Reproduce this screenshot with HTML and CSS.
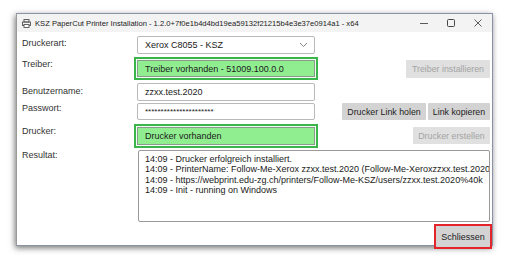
FILE: index.html
```html
<!DOCTYPE html>
<html lang="de">
<head>
<meta charset="utf-8">
<title>KSZ PaperCut Printer Installation</title>
<link rel="stylesheet" href="styles.css">
</head>
<body>
<div class="stage">
  <div class="window">
    <div class="titlebar">
      <svg class="app-icon" width="9" height="9" viewBox="0 0 9 9">
        <rect x="2" y="0.5" width="5" height="2.5" fill="none" stroke="#555" stroke-width="0.9"/>
        <rect x="0.5" y="3" width="8" height="3.5" fill="none" stroke="#555" stroke-width="0.9"/>
        <rect x="2" y="5.5" width="5" height="3" fill="#fff" stroke="#555" stroke-width="0.9"/>
      </svg>
      <span class="title">KSZ PaperCut Printer Installation - 1.2.0+7f0e1b4d4bd19ea59132f21215b4e3e37e0914a1 - x64</span>
      <div class="controls">
        <svg width="10" height="10" viewBox="0 0 10 10"><path d="M1 5.5H9" stroke="#333" stroke-width="0.8"/></svg>
        <svg width="10" height="10" viewBox="0 0 10 10"><rect x="1.5" y="1.5" width="7" height="7" rx="1" fill="none" stroke="#333" stroke-width="0.9"/></svg>
        <svg width="10" height="10" viewBox="0 0 10 10"><path d="M1.5 1.5L8.5 8.5M8.5 1.5L1.5 8.5" stroke="#333" stroke-width="0.8"/></svg>
      </div>
    </div>
    <div class="content">
      <div class="row r1">
        <div class="label">Druckerart:</div>
        <div class="field select">
          <span>Xerox C8055 - KSZ</span>
          <svg class="chev" width="9" height="6" viewBox="0 0 9 6"><path d="M1 1L4.5 4.5L8 1" fill="none" stroke="#666" stroke-width="0.8"/></svg>
        </div>
        <div class="actions"></div>
      </div>
      <div class="row r2">
        <div class="label">Treiber:</div>
        <div class="status"><div class="status-inner">Treiber vorhanden - 51009.100.0.0</div></div>
        <div class="actions"><button class="btn disabled w-install">Treiber installieren</button></div>
      </div>
      <div class="row r3">
        <div class="label lb-user">Benutzername:</div>
        <div class="field">zzxx.test.2020</div>
        <div class="actions"></div>
      </div>
      <div class="row r4">
        <div class="label lb-pass">Passwort:</div>
        <div class="field pw">**********************</div>
        <div class="actions gap"><button class="btn w-holen">Drucker Link holen</button><button class="btn w-kopieren">Link kopieren</button></div>
      </div>
      <div class="row r5">
        <div class="label">Drucker:</div>
        <div class="status"><div class="status-inner">Drucker vorhanden</div></div>
        <div class="actions"><button class="btn disabled w-erstellen">Drucker erstellen</button></div>
      </div>
      <div class="row r6">
        <div class="label lb-res">Resultat:</div>
        <div class="log">
          <div>14:09 - Drucker erfolgreich installiert.</div>
          <div>14:09 - PrinterName: Follow-Me-Xerox zzxx.test.2020 (Follow-Me-Xeroxzzxx.test.2020</div>
          <div>14:09 - https://webprint.edu-zg.ch/printers/Follow-Me-KSZ/users/zzxx.test.2020%40k</div>
          <div>14:09 - Init - running on Windows</div>
        </div>
      </div>
      <div class="row r7">
        <div class="close-wrap"><button class="btn w-close">Schliessen</button></div>
      </div>
    </div>
  </div>
</div>
</body>
</html>
```
FILE: styles.css
```css
html, body {
  margin: 0;
  padding: 0;
  background: #ffffff;
}
body {
  width: 511px;
  height: 260px;
  overflow: hidden;
  font-family: "Liberation Sans", Arial, sans-serif;
  color: #1f1f1f;
}
.stage {
  padding: 13px 17px 0 16px;
}
.window {
  width: 477px;
  height: 233px;
  background: #ffffff;
  border: 1px solid #8a93a6;
  border-left-color: #9a9a9a;
  box-sizing: border-box;
  box-shadow: -1px 2px 6px rgba(0,0,0,0.55);
}
.titlebar {
  height: 18px;
  background: #f3f3f3;
  display: flex;
  align-items: center;
  padding-left: 5px;
}
.app-icon {
  flex: none;
  margin-right: 4px;
}
.title {
  font-size: 7.6px;
  color: #222;
  white-space: nowrap;
  flex: 1;
  overflow: hidden;
}
.controls {
  display: flex;
  gap: 17px;
  padding-right: 9px;
  align-items: center;
}
.content {
  padding: 4px 2px 0 5px;
}
.row {
  display: grid;
  grid-template-columns: 112px 184px 1fr;
  align-items: center;
}
.label {
  font-size: 9px;
  color: #333;
  align-self: start;
  padding-top: 2px;
  line-height: 11px;
}
.r1 { height: 18px; margin-bottom: 3px; }
.r2 { height: 23px; margin-bottom: 3px; }
.r3 { height: 18px; margin-bottom: 2px; }
.r4 { height: 17px; margin-bottom: 4px; }
.r5 { height: 24px; margin-bottom: 2px; }
.r6 { height: 72px; margin-bottom: 2px; }
.r7 { height: 25px; display: flex; justify-content: flex-end; }
.lb-user { padding-top: 3px; }
.lb-pass { padding-top: 0; }
.lb-res { padding-top: 0; }
.field {
  margin: 0 3px;
  height: 100%;
  box-sizing: border-box;
  border: 1px solid #b9b9b9;
  border-radius: 2px;
  background: #fff;
  font-size: 9px;
  display: flex;
  align-items: center;
  padding-left: 7px;
  color: #1a1a1a;
}
.select {
  justify-content: space-between;
  padding-right: 6px;
}
.pw {
  font-size: 8px;
}
.status {
  height: 100%;
  box-sizing: border-box;
  border: 2px solid #39b54a;
  padding: 1px;
  background: #f4fbf4;
}
.status-inner {
  height: 100%;
  box-sizing: border-box;
  border: 1px solid #8a9a8a;
  background: #90ee90;
  font-size: 9px;
  display: flex;
  align-items: center;
  padding-left: 7px;
  color: #1a1a1a;
}
.actions {
  display: flex;
  justify-content: flex-end;
  align-items: center;
  height: 100%;
}
.actions.gap { gap: 2px; }
.btn {
  font-family: "Liberation Sans", Arial, sans-serif;
  font-size: 8.8px;
  border: none;
  border-radius: 1px;
  background: #d3d3d3;
  color: #222;
  padding: 0;
  margin: 0;
  height: 18px;
}
.btn.disabled {
  background: #e0e0e0;
  color: #a3a3a3;
}
.w-install { width: 84px; height: 18px; }
.w-holen { width: 84px; height: 17px; }
.w-kopieren { width: 62px; height: 17px; }
.w-erstellen { width: 77px; height: 17px; margin-top: -1px; }
.log {
  grid-column: 2 / 4;
  margin-left: 4px;
  height: 100%;
  box-sizing: border-box;
  border: 1px solid #9a9a9a;
  border-radius: 2px;
  padding: 3px 0 0 6px;
  font-size: 9px;
  line-height: 10.3px;
  white-space: nowrap;
  overflow: hidden;
  color: #1a1a1a;
}
.close-wrap {
  border: 2px solid #e3242b;
  padding: 0;
  height: 25px;
  box-sizing: border-box;
  display: flex;
  margin-right: -2px;
}
.w-close {
  width: 54px;
  height: 21px;
  font-size: 9px;
  background: #d3d3d3;
}
```
